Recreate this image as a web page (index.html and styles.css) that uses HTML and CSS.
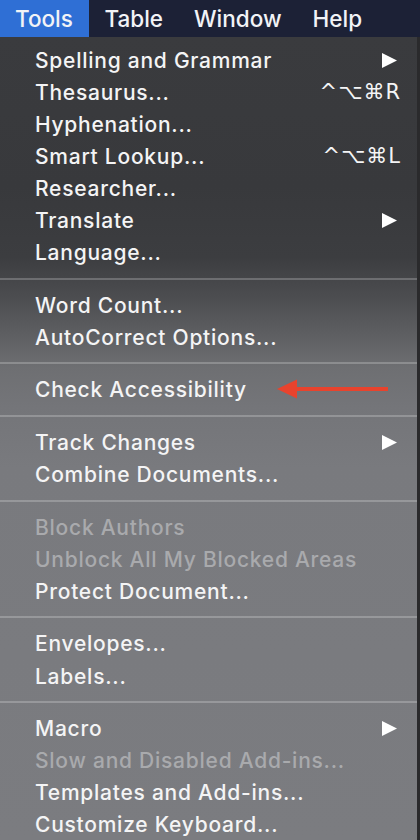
FILE: index.html
```html
<!DOCTYPE html>
<html>
<head>
<meta charset="utf-8">
<link rel="stylesheet" href="styles.css">
</head>
<body>
<div class="screen">
  <div class="menubar">
    <span class="mb-item active">Tools</span>
    <span class="mb-item">Table</span>
    <span class="mb-item">Window</span>
    <span class="mb-item">Help</span>
  </div>
  <div class="menu">
    <div class="row"><span>Spelling and Grammar</span><svg class="sub" viewBox="0 0 15 15"><polygon points="0,0 15,7.5 0,15" fill="#fff"/></svg></div>
    <div class="row"><span>Thesaurus...</span><span class="key">^⌥⌘R</span></div>
    <div class="row"><span>Hyphenation...</span></div>
    <div class="row"><span>Smart Lookup...</span><span class="key">^⌥⌘L</span></div>
    <div class="row"><span>Researcher...</span></div>
    <div class="row"><span>Translate</span><svg class="sub" viewBox="0 0 15 15"><polygon points="0,0 15,7.5 0,15" fill="#fff"/></svg></div>
    <div class="row"><span>Language...</span></div>
    <div class="sep"></div>
    <div class="row"><span>Word Count...</span></div>
    <div class="row"><span>AutoCorrect Options...</span></div>
    <div class="sep"></div>
    <div class="row"><span>Check Accessibility</span></div>
    <div class="sep"></div>
    <div class="row"><span>Track Changes</span><svg class="sub" viewBox="0 0 15 15"><polygon points="0,0 15,7.5 0,15" fill="#fff"/></svg></div>
    <div class="row"><span>Combine Documents...</span></div>
    <div class="sep"></div>
    <div class="row disabled"><span>Block Authors</span></div>
    <div class="row disabled"><span>Unblock All My Blocked Areas</span></div>
    <div class="row"><span>Protect Document...</span></div>
    <div class="sep"></div>
    <div class="row"><span>Envelopes...</span></div>
    <div class="row"><span>Labels...</span></div>
    <div class="sep"></div>
    <div class="row"><span>Macro</span><svg class="sub" viewBox="0 0 15 15"><polygon points="0,0 15,7.5 0,15" fill="#fff"/></svg></div>
    <div class="row disabled"><span>Slow and Disabled Add-ins...</span></div>
    <div class="row"><span>Templates and Add-ins...</span></div>
    <div class="row"><span>Customize Keyboard...</span></div>
  </div>
  <svg class="annot" viewBox="0 0 115 22"><polygon points="2,11 22,1.5 22,20.5" fill="#e8432d"/><rect x="20" y="9" width="93" height="4" fill="#e8432d"/></svg>
</div>
</body>
</html>
```

FILE: styles.css
```css
html, body {
  margin: 0;
  padding: 0;
  background: #2a2a2c;
}
.screen {
  position: relative;
  width: 420px;
  height: 840px;
  overflow: hidden;
  background: #2a2a2c;
  font-family: Inter, "Noto Sans", "DejaVu Sans", sans-serif;
  color: #f4f4f5;
}
.menubar {
  display: flex;
  height: 37px;
  background: #1c2136;
  font-size: 22.5px;
  font-weight: 500;
  align-items: center;
}
.mb-item {
  height: 37px;
  line-height: 37px;
  padding: 0 15.5px;
  color: #f2f3f6;
}
.mb-item.active {
  background: #2f6fd5;
  padding: 0 16px 0 15px;
}
.menu {
  width: 417px;
  padding: 7px 0 10px;
  background: linear-gradient(to bottom, #3a3b3e 0px, #38393c 150px, #3c3d40 220px, #46474a 245px, #4c4d50 260px, #5f6063 300px, #6e6f72 330px, #747579 370px, #797a7e 430px, #7b7c80 803px);
  font-size: 21px;
  font-weight: 500;
  letter-spacing: 0.75px;
}
.row {
  display: flex;
  align-items: center;
  justify-content: space-between;
  height: 32.1px;
  padding: 0 20px 0 35px;
}
.row.disabled {
  color: #a9aaad;
}
.key {
  font-family: "DejaVu Sans", sans-serif;
  font-size: 21px;
  letter-spacing: 1px;
  margin-right: -4px;
}
.sub {
  width: 15px;
  height: 15px;
}
.sep {
  height: 2px;
  margin: 9px 0 9.5px;
  background: rgba(255, 255, 255, 0.22);
}
.annot {
  position: absolute;
  left: 275px;
  top: 378px;
  width: 115px;
  height: 22px;
}
```
